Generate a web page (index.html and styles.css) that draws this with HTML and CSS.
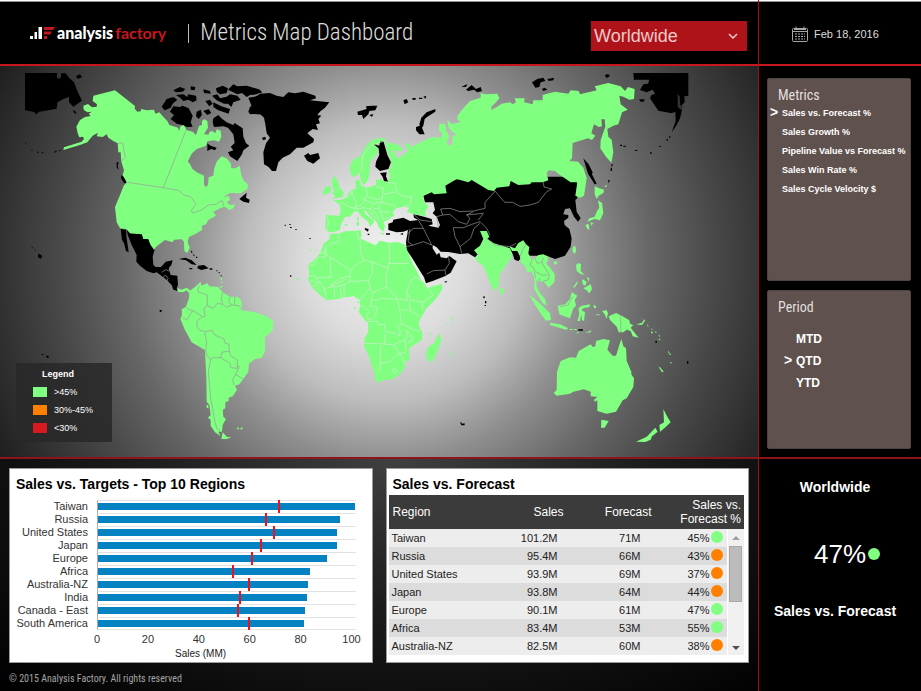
FILE: index.html
```html
<!DOCTYPE html>
<html lang="en">
<head>
<meta charset="utf-8">
<title>Metrics Map Dashboard</title>
<link rel="stylesheet" href="styles.css">
</head>
<body>
<div class="dashboard">
  <header class="masthead">
    <div class="logo">
      <svg class="logo-mark" viewBox="0 0 25 13" aria-hidden="true">
        <path fill="#fff" d="M0 9h3v3H0zM4.500 5h2.500v7H4.500zM8.500 0h3.500v12H8.500z"/>
        <path fill="#c8161d" d="M14 0h11l-2 3h-9zM14 4.500h8l-2 3h-6zM14 9h3v3h-3z"/>
      </svg>
      <span class="logo-a">analysis</span><span class="logo-b">factory</span>
    </div>
    <h1 class="title">Metrics Map Dashboard</h1>
    <div class="region-picker">
      <select class="region-select" aria-label="Region"><option>Worldwide</option><option>Europe</option><option>Africa</option></select>
      <svg class="chevron" viewBox="0 0 10 6" aria-hidden="true"><path d="M1 1l4 4 4-4" fill="none" stroke="#f1c9ca" stroke-width="1.500"/></svg>
    </div>
  </header>
  <div class="date">
    <svg class="calendar" viewBox="0 0 16 16" aria-hidden="true">
      <g fill="none" stroke="#a5a5a5"><rect x=".5" y="2.500" width="15" height="13" rx="1"/><path d="M1 5.500h14M4 .5v3M12 .5v3M2 3.500h12"/><path stroke-dasharray="2 1" d="M3 8h10M3 10.500h10M3 13h10"/></g>
    </svg>
    <span>Feb 18, 2016</span>
  </div>

  <section class="map">
    <svg class="world" viewBox="0 3 2274 1173" role="img" aria-label="World map of sales against forecast">
      <g class="none">
        <g>
          <path d="M75 24H172L170 36L176 42L183 36V25H197L207 38L222 52L232 78L246 107L220 125L207 112V96L190 102L172 112L170 131L118 140L108 148L103 141L75 136ZM230 32L240 28L246 36L236 41L229 38ZM218 135l8 4l4 8l-7-3z"/>
          <path d="M510 140L520 124L540 126L548 122L566 130L578 152L572 172L578 185L560 186L548 180L530 176L512 162L522 150ZM485 125L500 102L520 96L532 104L518 116L512 128L494 136ZM520 76L540 66L556 72L548 80L528 82ZM528 90L550 88L562 96L564 88L588 92L590 106L578 112L565 104L550 108L540 98ZM572 64L586 66L584 76L572 74ZM590 140L602 134L606 150L596 162L588 154ZM610 73L630 78L632 86L612 84ZM616 108l14-4l8 12l-10 8zM648 70L668 62L684 70L680 84L660 88L650 80ZM636 92L652 88L660 100L680 95L690 88L712 92L722 104L700 112L694 126L684 116L672 116L650 106ZM640 112L664 124L690 132L686 146L655 136L640 126ZM610 138l16-6l8 12l-12 6zM700 58L712 64L740 62L780 74L786 84L760 84L740 96L726 84L712 88L684 74ZM745 98L800 90V150L752 146L756 126Z"/>
          <path d="M640 160L655 150L664 160L680 172L700 180L704 174L728 190L730 215L738 235L748 242L730 256L726 268L712 288L690 274L684 262L700 256L692 245L704 234L700 208L684 188L670 184L642 186L638 172ZM622 235L632 242L650 248L645 256L634 252L622 258ZM718 402L740 383L738 398L749 404L747 414L730 410ZM363 330L378 342L382 356L372 354L364 342ZM350 292h6l-3 10l3 12l-6-6z"/>
          <path d="M93 544l6 4l-2 2zM104 552l4 4l-3 1zM114 568l5-1l8 7l-5 7l-8-4zM76 232h3v3h-3zM94 254h3v3h-3zM111 260h5v3h-5zM125 262h5v3h-5zM162 260l8-3v3l-6 3zM176 255h6v2h-6z"/>
          <path d="M362 492L378 494L380 520L386 562L378 558L372 535L366 525ZM380 495L392 505L426 508L430 522L445 522L452 540L464 552L458 575L460 600L467 606L483 606L497 590L518 586L514 600L508 607L506 612L512 630L532 632L534 660L530 670L534 678L520 674L515 660L497 642L470 622L460 625L440 618L420 602L409 590L410 570L395 540L384 512Z"/>
          <path d="M536 582L556 578L575 586L590 600L575 598L558 586ZM594 602L612 600L626 610L604 615L592 610ZM568 609h9v4h-9zM629 610h8v4h-8zM649 616h3v3h-3zM656 621h3v4h-3zM662 631h3v3h-3zM578 570l4-2l2 6zM588 575h4v4h-4zM574 555l4 8l-5 0zM582 552l4 6zM479 734l7 2l-3 6l-4-2zM125 867h5v3h-5zM138 872h8v6h-6z"/>
        </g>
        <g transform="translate(750 0)">
          <path d="M-14 64L36 80L20 88L0 90ZM12 98L30 86L60 84L80 92L100 96L115 82L135 85L160 80L196 92L198 100L180 106L238 112L225 128L212 138L202 150L214 152L205 162L210 175L198 178L204 195L188 192L172 205L192 222L190 232L160 248L140 248L120 268L98 278L85 292L78 318L66 318L55 305L42 298L40 262L48 235L60 218L50 205L46 178L42 158L28 145L0 148L-5 140L0 125L18 118ZM36 218l10-3l2 8l-9 3z"/>
          <path d="M162 272L175 264L180 270L205 264L210 280L190 296L172 288ZM322 140L350 132L348 124L365 122L382 122L376 136L358 138L355 148L340 162L336 150L324 150ZM358 150l12-3l-4 9zM460 106L470 102L475 112L464 118ZM487 99h10v5h-10zM507 98h10v4h-10zM520 95l9-3l-3 9zM498 186L510 182L508 178L514 158L530 142L556 132V140L532 155L524 162L520 182L516 188L524 208L508 208L498 196ZM634 66L652 57L648 66ZM648 74L665 60L678 72L692 66L696 78L682 82L672 74L655 78Z"/>
          <path d="M520 392L545 380L600 345L700 335H980L982 400L976 405L980 440L992 460L984 470L972 455L960 430L945 432L940 448L955 450V458L942 468L944 480L958 492L965 520L962 545L945 572L915 582L890 572H820L805 588L795 585L785 560L690 560L675 577L655 565L630 567L595 561L572 560L560 547L548 540V550L560 569L568 563L572 577L590 580L598 573L620 589L602 623L586 633L550 647L528 655L522 637L505 610L485 577L470 555L468 530L474 495L460 500L440 502L415 495V476L428 472L430 464L460 458L480 468L505 465L492 458L490 447L522 455L545 462L548 478L535 482L565 488L570 480L560 455L548 445L555 435L550 412L525 412Z"/>
          <path d="M344 489l12 3l-2 8l-9-6zM353 506h5v4h-5zM408 505h12v4h-12zM450 507l10-3l-2 6zM104 479h4v3h-4zM118 477h4v3h-4zM120 486h5v3h-5zM136 492h4v3h-4zM178 519h4v3h-4zM120 631h4v4h-4zM582 650l10-2l-4 5z"/>
        </g>
        <g transform="translate(1500 0)">
          <path d="M400 24H565V92L553 94L554 112L546 120L545 140L540 160L530 180L515 202L527 168L526 140L515 145L475 137L450 100L454 90L465 86L458 74L440 82L420 75L430 58L444 56L448 44L402 44ZM417 103h16v6l-10 2zM314 31l10-4l6 6l-10 6zM96 52L112 42L130 38L136 48L122 52L118 66L106 68ZM142 42l20-4l-2 8l-14 2zM126 72l8-4l8 6l-12 4zM250 280L266 298L278 322L276 328L290 356L284 358L264 326ZM334 298h4v6h-4zM332 308h4v10h-4zM324 346l6-1l-4 10z"/>
          <path d="M360 239h6v4h-6zM370 242h8v3h-8zM405 255h7v3h-7zM450 262h5v4h-5zM474 246l8-4v4zM500 222h4v5h-4zM507 214h4v4h-4z"/>
        </g>
        <path transform="translate(1380 480)" d="M70 214h4v6h-4zM75 228h4v7h-4zM74 240h4v3h-4zM586 348h5v5h-5zM681 408h4v8h-4zM0 590l8 6l6-1v6h-10zM355 313h14v4h-14z"/>
      </g>
      <path class="gap" d="M2033 88l6 6l2 26l10 6l-8 8l-10-8z"/>

      <g class="high">
        <path d="M345 76L405 123L404 131L412 140L422 139L424 132L440 136L462 134L466 146L478 142L487 152L502 168L508 180L534 188L537 198L542 183L552 181L560 196L578 200L588 210L597 183L606 180V168L613 163L622 168L624 188L612 207L625 209L629 200L636 198L646 205L650 193L662 197L664 215L657 230L642 226L622 229L618 242L590 252L575 266L563 290L568 294L577 311L590 322L612 332V360L618 366L624 360L626 337L640 332L643 310L650 290L665 274L680 280L692 295L694 310L706 310L719 302L724 330L730 345L743 358V372L722 385L690 384L670 395L686 393L690 405L680 412L690 420L705 418L700 430L688 435L675 425L664 428L640 440L648 452L625 465L618 478L605 483L607 494L585 508L567 516L563 530L569 548L562 564L553 558L552 530L545 523L522 524L518 532L495 525L480 536L468 545L462 554L452 540L445 522L430 522L426 508L390 505L380 493L360 490L350 472L345 426L358 395L371 362L380 352L368 330L372 316L364 290L362 262H355L353 235L340 228L325 218L320 208L308 216L290 214L294 203L278 212L262 232L240 240L190 255L192 247L245 230L252 222L249 215L238 217L233 205L229 185L240 165L255 156L272 153L266 146L276 140L262 142L251 134L250 122L264 117L276 127L290 125L291 118L278 108L280 92Z"/>
        <path transform="translate(0 570)" d="M533 110V100L545 104L560 98L570 106L566 114L560 106L550 112ZM568 108L585 96L602 80L604 92L622 85L628 94L655 96L668 112L690 125L712 125L724 136L726 160L722 165L765 172L800 184L820 198L819 225L795 247V290L785 308L765 312L747 326L745 350L730 372L718 388L705 392L711 404L698 424L686 428V438L676 442V460L668 465L670 485L678 492L668 510L666 530H655L662 544L645 532L632 512V495L624 488L632 480L628 450L620 440L619 370L615 285L575 262L555 225L541 192L546 180L545 163L558 155L567 130ZM668 532L680 545L694 547L680 552H664ZM710 517l8 2l-4 6zM720 520l9-3l-4 8zM620 450h5v9h-5zM662 68h4v6h-4zM664 79h3v6h-3zM661 92h5v6h-5zM888 72l9-3v3l-6 4z"/>
        <g transform="translate(750 0)">
          <path d="M300 300L312 282L330 276L338 258L350 240L365 226L385 220H405L408 234L398 228L390 240L372 236L384 250V262L364 285L358 300L360 318L354 345L342 360L334 350L328 322L322 330L308 336L300 322Z"/>
          <path d="M406 232L440 238L458 250L456 258L422 258L440 268L434 276L448 278L464 266L474 258L466 238L480 234V248L520 228L546 216L572 218L578 208L566 195L568 176L586 176L588 196L598 214L590 232L592 240H606L608 212L620 210L606 200L596 188L592 166L606 178L634 170L622 165V152L640 130L660 108L692 98V84L706 88L742 86L748 100L738 112L724 125V136L740 126L755 116L780 112L788 118L798 112L794 100H824L822 112L848 118L850 106H878V90L915 80L955 86L962 76L986 78L990 88L1040 76L1034 64L1075 54L1112 64L1125 78L1134 66L1154 72L1152 102L1138 104L1120 95L1108 92L1112 118L1133 134L1116 142L1105 178L1090 182L1072 192L1075 215L1085 225L1090 262L1084 293L1068 275L1051 250L1052 225L1066 185L1064 163H1054L1056 184L1046 186L1032 178L1024 205L1036 212L1026 225L1014 220L968 234L966 280L958 288L984 290L1000 308L1010 340L1002 392L990 398L976 392L982 352L962 352L930 330L915 318L895 316L890 325L895 346L878 352H845L840 358L805 360L782 348L778 364L740 368L732 378L715 375L665 345L655 352L620 342L586 362L590 385L552 388L545 382L520 392V405L535 425L525 440L528 455L510 450L490 448L470 440L478 428L460 425L440 430L428 440L432 452L415 465L400 470L405 485L400 500L388 490L380 470L362 455L345 435L342 440L350 450L370 465L372 472L360 485L355 470L335 455L322 438L312 440L300 455H285L272 480L270 495L250 502L235 500L226 492L228 450L268 452L272 438L270 420L250 405L272 405L290 395L300 378L318 370L316 345L328 345L335 362L350 368L378 360V345L392 342L408 352L420 340L416 318L425 300L423 285L410 255Z"/>
          <path d="M246 345L254 332L262 345L270 370L282 382L278 396L248 402L256 392L246 385L254 375L246 362ZM218 382L226 365L244 364L242 382L222 390ZM321 456h5v10h-5zM320 470h7v12h-7zM284 478h8v4h-8zM388 502l18 4l-8 3zM170 551h5v3h-5zM180 554h5v3h-5zM196 554h4v3h-4z"/>
        </g>
        <path transform="translate(1500 0)" d="M284 364L298 370L312 374L310 384L296 392L290 402L284 388ZM294 406L306 414L310 445L300 466L284 462L262 470L268 460L284 455L290 440L298 428ZM256 480L266 476L268 494L262 492ZM272 472l8 2l-6 8zM312 365l8-6v6zM220 545l6-3l2 16l-4 8l-4-8z"/>
        <path transform="translate(870 465)" d="M120 42L150 40L165 34L200 32L212 30L215 48L210 55L232 65L258 76L268 62L298 68L325 66L345 74L352 92L368 130L380 152L392 178L402 190L412 204L432 198L456 192L458 205L440 235L410 265L392 295L386 308L390 325L398 340L396 360L358 384V420L345 426L344 444L330 462L308 478L280 480L265 488L255 480L254 462L235 405L222 380L224 355L235 335L234 310L222 298L206 275L210 262V240L190 228L172 232H160L148 236L110 241L90 225L66 202L54 178L58 160L54 135L72 120L90 100L102 70L118 58ZM408 398L416 380L432 370L448 340L454 360L440 400L428 424L412 422ZM484 292l4 2v10l-4-2zM468 309h4v4h-4zM472 402h8v4h-8zM486 398h6v4h-6zM416 336l12 6l-4 2zM192 262h5v4h-5zM202 244h6v6h-6z"/>
        <g transform="translate(1380 480)">
          <path d="M60 18H80L88 35L82 42L102 55L150 70L156 85L155 98L118 148V178L108 196L98 192L85 160L70 122L58 115L44 98L56 92L42 76L60 62L70 42ZM120 190l8-2l5 12l-4 8h-8zM148 64L165 70L175 54L190 46L198 58L208 66L205 85L215 105L225 100L235 90L250 88L262 94L265 105L258 115L272 130L284 148V170L266 188L258 178L250 168L240 172L228 165L230 185L240 205L255 222L260 242L248 235L234 212L222 190L224 165L215 140L202 142L196 125L182 112L180 95L172 78L156 78Z"/>
          <path d="M208 210L222 220L245 240L270 265L273 285L258 287L245 270L225 240ZM270 293L300 298L325 310L318 314L290 306L270 300ZM293 242L315 238L330 222L335 202L352 212L344 225L348 242L340 250L330 280L312 274L298 268ZM355 250L365 242L390 238L388 246L370 250L364 256L375 262L372 288L366 285L364 268L360 288H352L358 268ZM348 120L355 114L363 118L362 138L374 150L360 146L350 138ZM366 162L380 170L376 182L368 178ZM380 155L388 160L386 170ZM370 190L392 178L396 192L388 205L380 196ZM340 186L352 168V176L342 190ZM338 68L344 64L347 72L344 86L338 80ZM280 112L288 108L293 114L285 120ZM399 240l8 2l2 6l-6 2zM404 270l14-3v4zM376 324L394 316L392 322ZM330 312h8v3h-8zM342 312h8v3h-8zM350 322h6v3h-6zM426 258L440 256L444 265L440 282L434 268ZM446 274L468 264L485 272L508 286L510 296L520 300L512 308L525 325L536 338L518 334L512 318L500 314L490 322H476L470 305L450 285ZM528 298L545 294L552 284L540 276L556 286L546 300ZM560 296l6 8l-2 2zM572 308l6 6l-2 2zM573 320h5v5h-5zM584 318l6 4l-2 3zM594 328l6 4v5zM596 341h5v3h-5zM624 376l5 8l-3 2zM628 386h5v3h-5zM630 412h5v3h-5zM596 426L600 427L611 440L606 442Z"/>
          <path d="M408 348L430 342L450 346L442 374L458 392H468L478 360L484 342L490 364L498 370L500 408L514 440V448L522 460L520 486L500 520L488 526L468 560L440 566L412 558V526L404 530L402 524L412 516L392 514V500L372 493L340 500L330 506L290 512L281 504L290 495L291 440L302 408L330 397L348 398L356 378L392 358L398 366L406 364ZM424 584L446 588L434 608H423ZM610 552L622 575L632 592L618 605L600 620L598 600L612 592ZM586 608L593 620L576 634L572 644L556 651L528 650L560 635Z"/>
        </g>
      </g>
      <g class="none" transform="translate(750 0)">
        <path d="M370 237L388 242L390 230L400 228L412 270L423 292L415 312L390 318L376 305L378 290L388 270L386 250ZM390 324L410 322L408 334L414 350L402 348L398 336ZM790 562l12 2l8 10l-4 12l-14-4z"/>
      </g>

      <g class="borders">
        <path d="M383 352L490 368L535 376L552 390L572 395L588 418L574 436L578 444L605 435L625 420L650 418L660 408H668L670 424M558 196L490 368M353 235L368 234L376 278L364 288M485 622l12 -8l10 4M486 640l10-10l8 10l-4 10"/>
        <path transform="translate(0 570)" d="M597 92L593 110L622 120V152L612 160L615 185L605 186L590 200L592 218L600 226L617 230M558 155L565 163L578 166L606 184M578 166L562 193L548 190M622 152L640 160L652 145L668 148L664 130L668 112M668 148L680 157L695 150L715 152L724 160M690 125L686 140L695 150M705 125L703 150M617 230L636 226L644 240L672 252L675 264L687 268L688 288L665 292L662 308H636L632 315L620 300L617 285L620 260L614 232M688 288L692 302L712 315V340L692 338L690 325L662 308M712 332L718 335L706 360L698 372L702 390M706 358L730 372M632 315L625 350L632 430L645 500L650 520L662 528"/>
        <path transform="translate(750 0)" d="M572 432L600 430L630 440L670 438L705 430V412L725 390L735 378L762 410L765 412L788 412L810 424L840 420L865 412L890 380L905 372L882 366L880 352M572 432L578 450L600 448L625 470L650 478L660 460L650 450L670 440M565 488L560 455L578 450M610 488H640L665 478L690 470L710 490L720 510M610 488L615 515L630 545L662 520L672 490L690 475M630 545L635 565M650 450L700 445L685 465M470 510L490 490L520 490L545 540M505 465L520 490M468 545L490 540L520 530L545 540M480 492L474 530L488 540M530 627L550 617L585 615L598 595L596 577M585 615L587 630M490 447L510 465L545 470M710 520L735 540L780 545L798 535"/>
        <path transform="translate(1380 480)" d="M180 95L190 70L198 58M215 105L210 120L222 130L226 160M225 100L232 115L246 112L255 130L268 150L264 165L250 168M246 112L250 98M226 140L245 150L262 150M240 172L238 160M300 245L325 240L332 224L340 215M482 270V322"/>
      </g>
      <g class="borders light">
        <path transform="translate(750 0)" d="M304 378L312 400L320 415L315 430M350 368L352 395L345 402L335 420L312 430M352 395L385 405L398 395L400 370L378 365M398 395L396 412L370 415L350 408L338 400M396 412L386 425L392 440L420 442M396 412L430 420L440 432M408 352L435 355L440 380L402 388M440 380L460 395L485 395L480 420L462 424M270 408L290 422L312 430L320 432L342 428L360 432L370 415M360 432L378 445L388 470M370 430L385 430M356 440L372 452L376 462M392 440L398 462L428 455M308 380L300 392L278 402M232 455L236 475L230 495M335 318L338 270L365 240L390 232L405 228"/>
        <path transform="translate(870 465)" d="M145 40L148 65L120 72L108 82L102 98L80 100M108 82V110L82 112L72 134L56 138M120 110L123 172L78 174L72 165L56 168M102 98L180 150L222 120L212 100L210 55M202 34L206 60M180 150V168L150 175L128 190L123 198M222 120L246 126L295 145V130H298V68M298 130H358M246 126L248 158L236 182L180 184V168M236 182L240 205L222 225L210 240M240 205L248 218L290 200L288 165L294 145M290 200L322 235L352 242M248 218L245 240H262L270 235L322 238M352 242L350 215L358 195L365 178L378 172L405 188M350 215L362 240L398 246L430 225L412 204M398 246V270M358 242L360 270L388 290M335 270H360M322 238L330 275L334 310L350 320L388 334M230 305L262 304L266 315L284 312L286 335L318 340L330 348V330L322 320L334 312M284 340L285 372L224 370M285 372L310 375L345 358L352 350L350 330L362 345L368 362L352 368M272 378L270 450H262M270 430L300 425L320 405L330 402L345 430M345 358L348 395L330 402L310 375M236 300L230 285L238 275L220 258H210M245 240L240 258L262 262L256 290L236 300M102 205L108 232M132 200L135 232M150 200L155 232M162 195V230M123 198L165 178M78 174L92 190L102 205L132 200L162 195L180 184M60 180L92 190M66 200L80 192L92 215M305 452l8-8l9 6l-6 9z"/>
      </g>
    </svg>
    <div class="legend">
      <h2 class="legend-title">Legend</h2>
      <ul class="legend-list">
        <li><i class="swatch green"></i>&gt;45%</li>
        <li><i class="swatch orange"></i>30%-45%</li>
        <li><i class="swatch red"></i>&lt;30%</li>
      </ul>
    </div>
  </section>

  <aside class="side">
    <nav class="panel metrics" aria-label="Metrics">
      <h2>Metrics</h2>
      <button class="active">Sales vs. Forecast %</button>
      <button>Sales Growth %</button>
      <button>Pipeline Value vs Forecast %</button>
      <button>Sales Win Rate %</button>
      <button>Sales Cycle Velocity $</button>
    </nav>
    <nav class="panel period" aria-label="Period">
      <h2>Period</h2>
      <button>MTD</button>
      <button class="active">QTD</button>
      <button>YTD</button>
    </nav>
  </aside>

  <section class="bottom">
    <div class="cards">
      <article class="card chart">
        <h2>Sales vs. Targets - Top 10 Regions</h2>
        <div class="bars" id="bars"></div>
        <div class="axis"><span>0</span><span>20</span><span>40</span><span>60</span><span>80</span><span>100</span></div>
        <p class="axis-title">Sales (MM)</p>
      </article>
      <article class="card forecast">
        <h2>Sales vs. Forecast</h2>
        <table>
          <colgroup><col class="c-region"><col class="c-sales"><col class="c-fore"><col class="c-pct"><col class="c-bar"></colgroup>
          <thead><tr><th>Region</th><th>Sales</th><th>Forecast</th><th colspan="2">Sales vs. Forecast %</th></tr></thead>
          <tbody>
            <tr><td>Taiwan</td><td>101.2M</td><td>71M</td><td>45%<i class="dot green"></i></td>
              <td class="scroll" rowspan="7"><div class="scrollbar"><i class="up"></i><i class="thumb"></i><i class="down"></i></div></td></tr>
            <tr><td>Russia</td><td>95.4M</td><td>66M</td><td>43%<i class="dot orange"></i></td></tr>
            <tr><td>United States</td><td>93.9M</td><td>69M</td><td>37%<i class="dot orange"></i></td></tr>
            <tr><td>Japan</td><td>93.8M</td><td>64M</td><td>44%<i class="dot orange"></i></td></tr>
            <tr><td>Europe</td><td>90.1M</td><td>61M</td><td>47%<i class="dot green"></i></td></tr>
            <tr><td>Africa</td><td>83.4M</td><td>53M</td><td>55%<i class="dot green"></i></td></tr>
            <tr><td>Australia-NZ</td><td>82.5M</td><td>60M</td><td>38%<i class="dot orange"></i></td></tr>
          </tbody>
        </table>
      </article>
    </div>
    <footer class="copyright">© 2015 Analysis Factory. All rights reserved</footer>
  </section>

  <section class="kpi">
    <h2>Worldwide</h2>
    <p class="kpi-value">47%<i class="dot green"></i></p>
    <h2>Sales vs. Forecast</h2>
  </section>
</div>
<script src="chart.js"></script>
</body>
</html>
```
FILE: styles.css
```css
* { box-sizing: border-box; }
body { margin: 0; background: #000; color: #fff; font-family: "Liberation Sans", Arial, sans-serif; }
h1, h2, p, ul { margin: 0; padding: 0; font-weight: normal; }
button { display: block; border: 0; padding: 0; background: none; color: inherit; font-family: inherit; cursor: pointer; }

.dashboard {
  display: grid;
  grid-template-columns: minmax(0, 1fr) 162px;
  grid-template-rows: 66px auto 1fr;
  min-height: 100vh;
}
.masthead, .date { border-bottom: 2px solid #c8161d; box-shadow: inset 0 1px #fff, inset 0 2px #8b9193; }
.masthead, .map, .bottom { border-right: 1px solid #9c1218; }

.masthead { display: flex; align-items: center; padding: 2px 11px 0 30px; }
.logo { display: flex; align-items: center; font: 900 16px/20px Lato, sans-serif; }
.logo-mark { width: 25px; height: 13px; margin-right: 2px; }
.logo-b { color: #c8161d; font-weight: 700; margin-left: 2px; }
.title { margin-left: 22px; padding-left: 12px; position: relative; font: 300 23px/28px "Roboto Condensed", Roboto, sans-serif; color: #dedede; white-space: nowrap; }
.title::before { content: ""; position: absolute; left: 0; top: 5px; width: 1px; height: 19px; background: #bbb; }
.region-picker { position: relative; margin: 6px 0 0 auto; width: 156px; }
.region-select { appearance: none; display: block; width: 100%; height: 30px; border: 0; border-radius: 0; padding: 0 3px; background: #ae1319; color: #f1c9ca; font: 18px/30px "Liberation Sans", sans-serif; }
.chevron { position: absolute; right: 9px; top: 12px; width: 10px; height: 6px; pointer-events: none; }

.date { display: flex; align-items: center; gap: 6px; padding: 4px 0 0 33px; font-size: 11px; color: #ddd; white-space: nowrap; }
.calendar { width: 16px; height: 16px; }

.map { position: relative; border-bottom: 2px solid #8e1418; background: radial-gradient(circle at 51% 50%, #f2f2f2 0, #dcdcdc 80px, #bdbdbd 140px, #8e8e8e 200px, #666 265px, #484848 330px, #303030 390px, #181818 450px); }
.world { display: block; width: 100%; height: auto; }
.none { fill: #000; }
.gap { fill: #333; }
.high { fill: #80ff80; }
.borders { fill: none; stroke: #9a9a9a; stroke-width: 2; }
.borders.light { stroke: #d4ecd4; }

.legend { position: absolute; left: 16px; bottom: 15px; width: 96px; padding: 4px 0 5px 17px; background: rgba(40, 40, 40, .85); font-size: 9px; font-weight: bold; line-height: 14px; }
.legend-title { margin-left: 9px; font-size: 9px; font-weight: bold; }
.legend-list { list-style: none; padding-top: 2px; }
.legend-list li { display: flex; align-items: center; gap: 7px; height: 18px; }
.swatch { width: 14px; height: 10px; }
.green { background: #80ff80; }
.orange { background: #ff8000; }
.red { background: #d71920; }

.side { display: flex; flex-direction: column; gap: 9px; padding: 12px 10px 8px 8px; border-bottom: 2px solid #8e1418; }
.panel { padding: 7px 0 0 10px; background: #5f524e; border: 1px solid #4e4441; border-radius: 2px; }
.panel h2 { font: 400 14px/18px "Roboto Condensed", Roboto, sans-serif; color: #e2dfde; }
.panel button { position: relative; text-align: left; white-space: nowrap; font-weight: bold; }
.panel .active::before { content: ">"; position: absolute; left: -12px; top: -1px; font-size: 14px; }
.metrics { flex: 204; }
.metrics button { margin-left: 4px; font-size: 9px; line-height: 19px; }
.period { flex: 157; }
.period h2 { margin-bottom: 12px; }
.period button { margin-left: 18px; font-size: 12px; line-height: 22px; }

.bottom { padding: 9px 9px 0 9px; background: radial-gradient(ellipse at 52% 0, #404040 0, #1c1c1c 45%, #000 100%); }
.cards { display: grid; grid-template-columns: minmax(0, 1fr) minmax(0, 1fr); gap: 13px; }
.card { height: 195px; background: #fff; color: #000; border: 1px solid #9a9a9a; }
.card h2, .kpi h2 { font-size: 14px; font-weight: bold; white-space: nowrap; }
.chart { padding: 6px 16px 0 6px; }
.chart h2 { line-height: 18px; }
.bars { margin-top: 7px; }
.bar-row { display: grid; grid-template-columns: 72px minmax(0, 1fr); column-gap: 9px; height: 13px; }
.bar-label { text-align: right; font-size: 11px; line-height: 13px; color: #333; white-space: nowrap; }
.track { position: relative; border-left: 1px solid #aaa; border-top: 1px solid #e2e2e2; padding-top: 2px; }
.bar-row:last-child .track { border-bottom: 1px solid #e2e2e2; }
.bar { height: 7px; background: #0482c1; }
.target { position: absolute; top: -1px; width: 2px; height: 13px; background: #f00f1c; }
.axis { display: flex; justify-content: space-between; margin: 3px -8px 0 69px; font-size: 11px; line-height: 13px; color: #333; }
.axis span { width: 24px; text-align: center; }
.axis-title { margin: 2px 0 0 159px; font-size: 10px; line-height: 12px; color: #222; }

.forecast { padding: 6px 4px 0 2px; }
.forecast h2 { margin: 0 0 2px 4px; line-height: 18px; }
table { width: 100%; border-collapse: collapse; table-layout: fixed; }
.c-region { width: 108px; } .c-sales { width: 75px; } .c-fore { width: 88px; } .c-bar { width: 17px; }
th { height: 34px; padding: 0 8px 0 4px; background: #3b3b3b; color: #fff; font-size: 12px; line-height: 14px; font-weight: normal; text-align: right; }
th:first-child, td:first-child { text-align: left; }
th:last-child { padding: 0 3px 0 0; }
td { height: 18px; padding: 0 14px 0 3px; font-size: 11px; line-height: 18px; text-align: right; color: #222; white-space: nowrap; }
td:nth-child(3) { padding-right: 19px; }
td:nth-child(4) { padding: 0 4px 0 0; }
tbody tr:nth-child(odd) { background: #ededed; }
tbody tr:nth-child(even) { background: #dcdcdc; }
.dot { display: inline-block; width: 12px; height: 12px; margin-left: 2px; border-radius: 50%; }
td .dot { margin-left: 1px; vertical-align: -1px; }
td.scroll { padding: 0; background: #f0f0f0; border-left: 1px solid #fff; }
.scrollbar { display: flex; flex-direction: column; align-items: center; height: 126px; }
.up, .down { width: 0; height: 0; border: 4px solid transparent; border-top: 0; border-bottom-color: #a0a0a0; margin: 7px 0 6px; }
.thumb { width: 13px; height: 56px; background: #bcbcbc; border: 1px solid #a8a8a8; }
.down { margin: auto 0 5px; border-bottom: 0; border-top: 4px solid #505050; }

.copyright { padding-top: 8px; font: 400 10px/15px "Roboto Condensed", Roboto, sans-serif; color: #a5a5a5; }

.kpi { display: flex; flex-direction: column; align-items: center; padding: 19px 10px 0 0; }
.kpi h2 { line-height: 18px; }
.kpi-value { display: flex; align-items: center; margin: 38px 0 28px 24px; font-size: 26px; line-height: 40px; }
```
FILE: chart.js
```js
const AXIS_MAX = 101.5;
const rows = [
  ["Taiwan", 101.2, 71], ["Russia", 95.4, 66], ["United States", 94.2, 69],
  ["Japan", 94.1, 64], ["Europe", 90.1, 60.5], ["Africa", 83.4, 53],
  ["Australia-NZ", 82.7, 59.3], ["India", 82.3, 55.5], ["Canada - East", 81.6, 54.7],
  ["South America", 81.3, 59]
];
const pct = (v) => (v / AXIS_MAX * 100) + "%";
document.getElementById("bars").innerHTML = rows.map(([name, sales, target]) =>
  `<div class="bar-row"><span class="bar-label">${name}</span>` +
  `<div class="track"><div class="bar" style="width:${pct(sales)}"></div>` +
  `<i class="target" style="left:${pct(target)}"></i></div></div>`).join("");
```
